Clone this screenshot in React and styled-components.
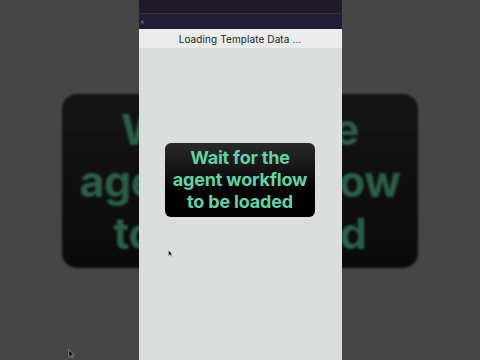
import React from "react"
import styled, { createGlobalStyle } from "styled-components"

const GlobalStyle = createGlobalStyle`
  html, body {
    margin: 0;
    padding: 0;
    background: #464646;
  }
  body {
    font-family: Inter, "Noto Sans", "Liberation Sans", sans-serif;
  }
`

const Stage = styled.div`
  position: relative;
  width: 480px;
  height: 360px;
  overflow: hidden;
  display: grid;
  background: #464646;
`

const Backdrop = styled.div`
  grid-area: 1 / 1;
  justify-self: center;
  align-self: start;
  margin-top: 94px;
  width: 356px;
  height: 174px;
  border-radius: 15px;
  background: linear-gradient(#151515, #0a0a0a);
  display: flex;
  align-items: center;
  justify-content: center;
  filter: blur(1.2px);
`

const Message = styled.div`
  color: ${(p) => p.color};
  font-size: ${(p) => p.size}px;
  line-height: ${(p) => p.lh}px;
  font-weight: 700;
  text-align: center;
  letter-spacing: -0.01em;
`

const Column = styled.div`
  grid-area: 1 / 1;
  justify-self: center;
  position: relative;
  width: 203px;
  height: 360px;
  display: flex;
  flex-direction: column;
  background: #dcdedd;
`

const TopBar = styled.div`
  height: 13px;
  background: #201a2a;
  border-bottom: 1px solid #3a3445;
`

const SubBar = styled.div`
  height: 15px;
  background: #221c36;
  display: flex;
  align-items: center;
  padding-left: 2px;
  color: #8a84a0;
  font-size: 5px;
`

const LoadingStrip = styled.div`
  height: 19px;
  background: #ebebeb;
  display: flex;
  align-items: center;
  justify-content: center;
  font-size: 10px;
  color: #222;
  letter-spacing: 0.01em;
`

const Body = styled.div`
  flex: 1;
  display: flex;
  flex-direction: column;
  align-items: center;
  padding-top: 95px;
`

const Toast = styled.div`
  width: 150px;
  height: 74px;
  border-radius: 6px;
  background: linear-gradient(#2a2a2a, #000000 70%);
  display: flex;
  align-items: center;
  justify-content: center;
`

const Cursor = styled.svg`
  position: absolute;
  left: ${(p) => p.x}px;
  top: ${(p) => p.y}px;
`

const Arrow = ({ x, y, s }) => (
  <Cursor x={x} y={y} width={s} height={s * 1.4} viewBox="0 0 10 14">
    <path d="M1 1 L1 12 L4 9 L6 13 L7.5 12.3 L5.6 8.5 L9 8.5 Z" fill="#111" stroke="#eee" strokeWidth="0.6" />
  </Cursor>
)

export default function App() {
  return (
    <>
      <GlobalStyle />
      <Stage>
        <Backdrop>
          <Message color="#2a5e4b" size={43} lh={52}>
            Wait for the
            <br />
            agent workflow
            <br />
            to be loaded
          </Message>
        </Backdrop>
        <Column>
          <TopBar />
          <SubBar>A</SubBar>
          <LoadingStrip>Loading Template Data ...</LoadingStrip>
          <Body>
            <Toast>
              <Message color="#62d3a4" size={18} lh={22}>
                Wait for the
                <br />
                agent workflow
                <br />
                to be loaded
              </Message>
            </Toast>
          </Body>
          <Arrow x={29} y={250} s={5} />
        </Column>
        <Arrow x={68} y={349} s={7} />
      </Stage>
    </>
  )
}
